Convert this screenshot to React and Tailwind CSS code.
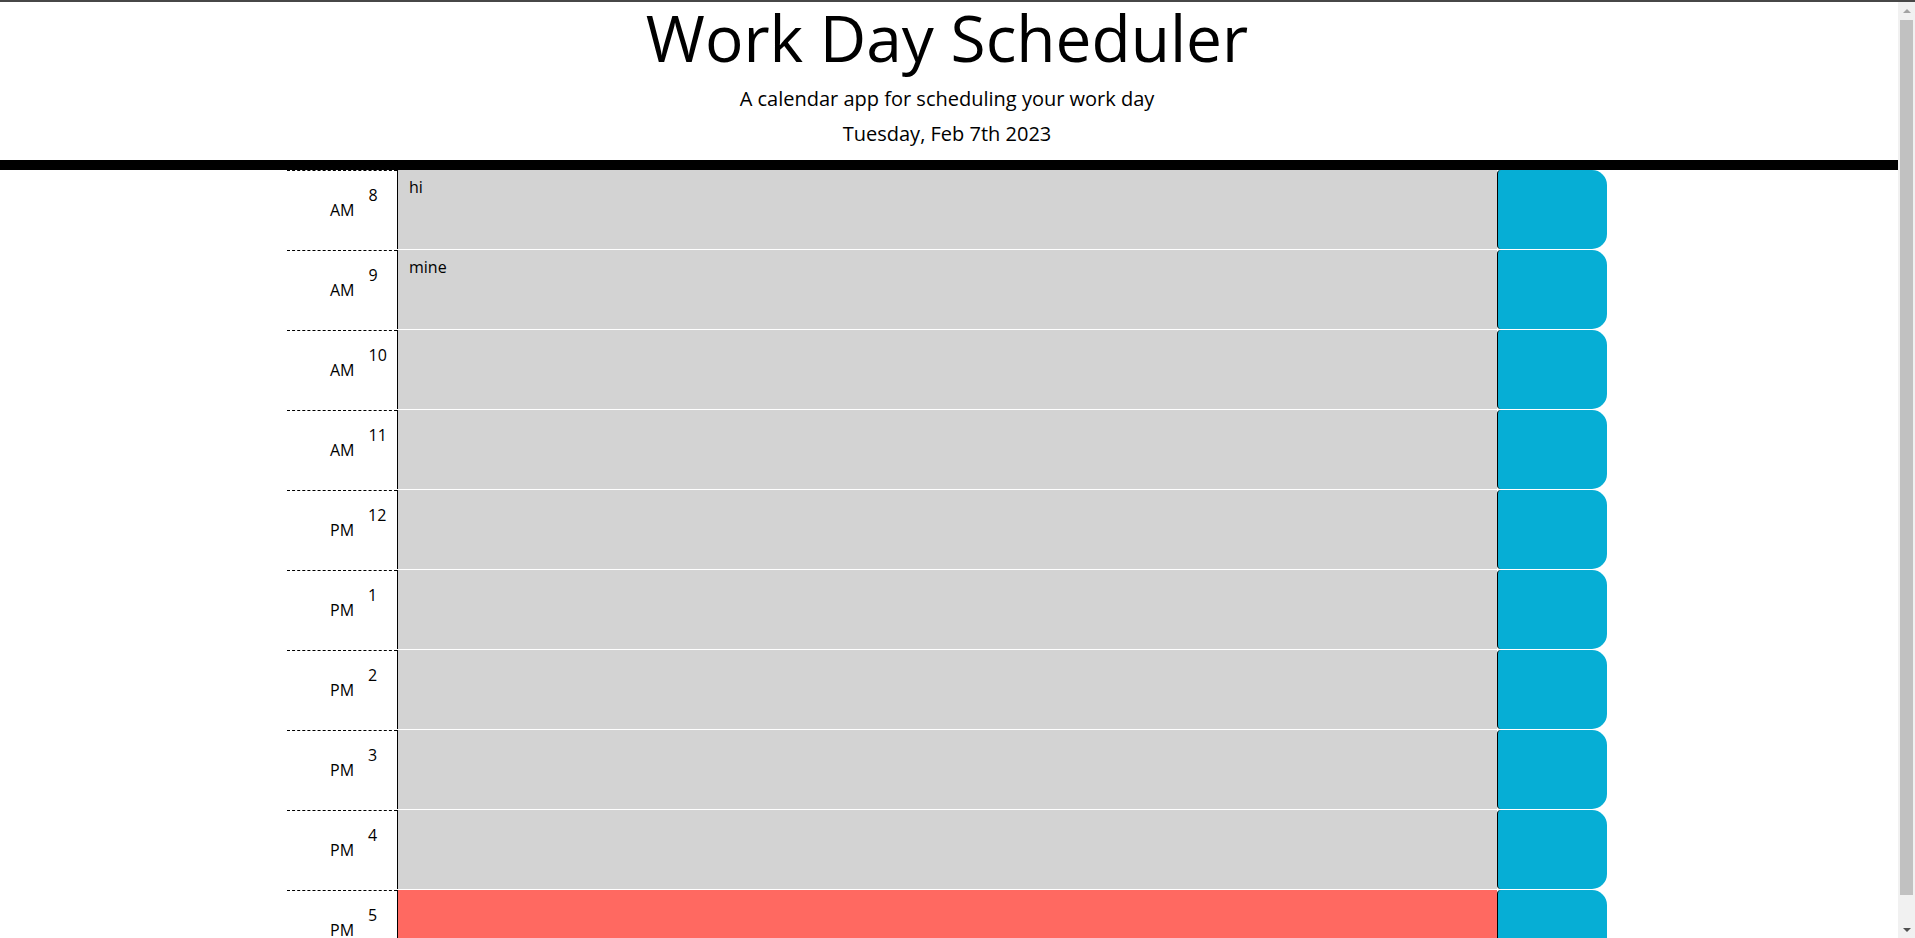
import { useState } from "react";

const HOURS = [
  { hour: 8, label: "AM", status: "past", text: "hi" },
  { hour: 9, label: "AM", status: "past", text: "mine" },
  { hour: 10, label: "AM", status: "past", text: "" },
  { hour: 11, label: "AM", status: "past", text: "" },
  { hour: 12, label: "PM", status: "past", text: "" },
  { hour: 1, label: "PM", status: "past", text: "" },
  { hour: 2, label: "PM", status: "past", text: "" },
  { hour: 3, label: "PM", status: "past", text: "" },
  { hour: 4, label: "PM", status: "past", text: "" },
  { hour: 5, label: "PM", status: "present", text: "" },
];

const STATUS_BG = {
  past: "bg-[#d3d3d3]",
  present: "bg-[#ff6961]",
  future: "bg-[#77dd77]",
};

function TimeBlock({ block }) {
  const [value, setValue] = useState(block.text);

  return (
    <div className="flex h-[80px] border-b border-white">
      {/* hour label */}
      <div className="flex w-[110px] items-start border-t border-dashed border-black pl-[43px] pt-[12px] text-[16px] leading-[24px] text-black">
        <span className="mt-[15px]">{block.label}</span>
        <span className="ml-[14px]">{block.hour}</span>
      </div>

      {/* note */}
      <textarea
        value={value}
        onChange={(e) => setValue(e.target.value)}
        className={`w-[1100px] resize-none border-l border-black pl-[11px] pr-[10px] pt-[5px] text-[16px] leading-[24px] text-black outline-none ${STATUS_BG[block.status]}`}
      />

      {/* save */}
      <button
        type="button"
        className="w-[110px] rounded-l-[4px] rounded-r-[15px] border-l border-black bg-[#06aed5]"
      />
    </div>
  );
}

function Scrollbar() {
  return (
    <div className="flex w-[17px] flex-col bg-[#f1f1f1]">
      <div className="flex h-[17px] items-center justify-center">
        <div className="h-0 w-0 border-x-[4px] border-b-[4px] border-x-transparent border-b-[#a3a3a3]" />
      </div>
      <div className="mx-[2px] mt-[1px] h-[875px] bg-[#c1c1c1]" />
      <div className="flex-1" />
      <div className="flex h-[17px] items-center justify-center">
        <div className="h-0 w-0 border-x-[4px] border-t-[4px] border-x-transparent border-t-[#505050]" />
      </div>
    </div>
  );
}

export default function App() {
  return (
    <div
      className="flex h-[938px] flex-col overflow-hidden bg-white"
      style={{ fontFamily: '"Open Sans", "Liberation Sans", sans-serif' }}
    >
      <div className="h-[2px] bg-[#474747]" />
      <div className="flex min-h-0 flex-1">
        <div className="flex-1 overflow-hidden">
          <header className="border-b-[10px] border-black pr-[4px] text-center text-black">
            <h1 className="text-[64px] font-normal leading-[72px]">
              Work Day Scheduler
            </h1>
            <p className="mt-[10px] text-[20px] leading-[30px]">
              A calendar app for scheduling your work day
            </p>
            <p className="mt-[5px] pb-[11px] text-[20px] leading-[30px]">
              Tuesday, Feb 7th 2023
            </p>
          </header>

          <div className="pr-[4px]">
            <div className="mx-auto w-[1320px]">
              {HOURS.map((block) => (
                <TimeBlock key={`${block.hour}${block.label}`} block={block} />
              ))}
            </div>
          </div>
        </div>
        <Scrollbar />
      </div>
    </div>
  );
}
